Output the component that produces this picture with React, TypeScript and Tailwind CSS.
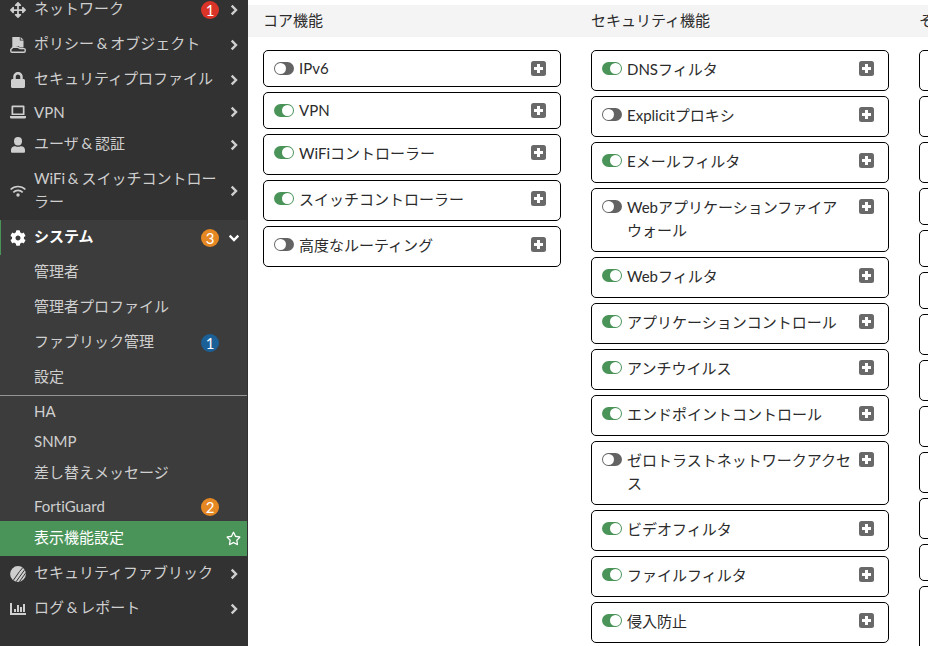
import type { ReactNode } from "react";
import clsx from "clsx";
import { FaArrowsAlt, FaCog, FaLock, FaRegStar } from "react-icons/fa";

type MenuItem = {
  label: string;
  icon?: ReactNode;
  badge?: { count: number; color: string };
  height: string;
};

type Feature = { name: string; enabled: boolean; height?: string };

const ROW = "h-[35px]";
const ROW_SHORT = "h-[30px]";

function PolicyIcon() {
  return (
    <svg width="16" height="16" viewBox="0 0 16 16" fill="currentColor">
      <path d="M2.3 0h7.5v3.4h3.7v7.2H10L8.600 9 2.300 11z" />
      <path d="M10.600 0l2.900 2.700h-2.900z" />
      <path
        d="M3 10.300h4.600c1.400 0 1.500 1.300 2.900 1.300h3.500a1.200 1.200 0 0 1 1.200 1.200v1.300a1.200 1.200 0 0 1-1.200 1.200H2a1.200 1.200 0 0 1-1.200-1.200v-1.600z"
        fill="#323232"
        stroke="currentColor"
        strokeWidth="1.400"
      />
    </svg>
  );
}

function LaptopIcon() {
  return (
    <svg width="16" height="14" viewBox="0 0 16 14" fill="currentColor">
      <path
        fillRule="evenodd"
        d="M2.500 0.500h11a1 1 0 0 1 1 1v8.500h-13V1.500a1 1 0 0 1 1-1zM3.200 2.200v6.300h9.600V2.200z"
      />
      <path d="M0 11h16v1.300a1.200 1.200 0 0 1-1.200 1.200H1.200A1.200 1.200 0 0 1 0 12.300z" />
    </svg>
  );
}

function UserIcon() {
  return (
    <svg width="16" height="16" viewBox="0 0 16 16" fill="currentColor">
      <ellipse cx="8" cy="4.200" rx="4" ry="4.200" />
      <path d="M1 14.800V13c0-2.200 1.700-3.800 3.800-3.800h.6c1.600.7 3.600.7 5.200 0h.6c2.100 0 3.800 1.600 3.800 3.800v1.800a1 1 0 0 1-1 1H2a1 1 0 0 1-1-1z" />
    </svg>
  );
}

function WifiIcon() {
  return (
    <svg width="16" height="12" viewBox="0 0 16 12" fill="none" stroke="currentColor" strokeWidth="1.700">
      <path d="M.6 4.500c4.300-4 10.500-4 14.800 0" />
      <path d="M3.300 7.300c2.700-2.500 6.700-2.500 9.400 0" />
      <circle cx="8" cy="10" r="1.700" fill="currentColor" stroke="none" />
    </svg>
  );
}

function FabricIcon() {
  return (
    <svg width="16" height="16" viewBox="0 0 16 16">
      <defs>
        <clipPath id="fabric">
          <circle cx="8" cy="8" r="7.900" />
        </clipPath>
      </defs>
      <g clipPath="url(#fabric)">
        <rect width="16" height="16" fill="currentColor" />
        <path
          d="M2.500 15.500L9.500 5.500L12.500 2M5.500 16.500L14.500 4M8.500 17L16 6.500M11.500 17L17 9.500"
          fill="none"
          stroke="#323232"
          strokeWidth="1"
        />
      </g>
    </svg>
  );
}

function ReportIcon() {
  return (
    <svg width="16" height="12" viewBox="0 0 16 12" fill="currentColor">
      <path d="M0 0h2v10h14v2H0z" />
      <path d="M4 6h2v3H4zM7 2h2v7H7zM10 4h2v5h-2zM13 1h2v8h-2z" />
    </svg>
  );
}

function Chevron({ down = false }: { down?: boolean }) {
  return (
    <svg
      width="12"
      height="12"
      viewBox="0 0 12 12"
      fill="none"
      stroke="currentColor"
      strokeWidth="2.400"
      className={down ? "rotate-90" : ""}
    >
      <path d="M3.700 1.700L8 6l-4.300 4.300" />
    </svg>
  );
}

const topMenu: MenuItem[] = [
  { label: "ネットワーク", icon: <FaArrowsAlt size={16} />, badge: { count: 1, color: "bg-[#da3327]" }, height: ROW },
  { label: "ポリシー & オブジェクト", icon: <PolicyIcon />, height: ROW },
  { label: "セキュリティプロファイル", icon: <FaLock size={16} />, height: ROW },
  { label: "VPN", icon: <LaptopIcon />, height: ROW_SHORT },
  { label: "ユーザ & 認証", icon: <UserIcon />, height: ROW },
  { label: "WiFi & スイッチコントローラー", icon: <WifiIcon />, height: "h-[58px]" },
];

const systemMenu: MenuItem[] = [
  { label: "管理者", height: ROW },
  { label: "管理者プロファイル", height: ROW },
  { label: "ファブリック管理", badge: { count: 1, color: "bg-[#1b6097]" }, height: ROW },
  { label: "設定", height: ROW },
];

const systemExtraMenu: MenuItem[] = [
  { label: "HA", height: ROW_SHORT },
  { label: "SNMP", height: ROW_SHORT },
  { label: "差し替えメッセージ", height: ROW },
  { label: "FortiGuard", badge: { count: 2, color: "bg-[#e58823]" }, height: ROW_SHORT },
];

const bottomMenu: MenuItem[] = [
  { label: "セキュリティファブリック", icon: <FabricIcon />, height: ROW },
  { label: "ログ & レポート", icon: <ReportIcon />, height: ROW },
];

const coreFeatures: Feature[] = [
  { name: "IPv6", enabled: false, height: "h-[37px]" },
  { name: "VPN", enabled: true, height: "h-[37px]" },
  { name: "WiFiコントローラー", enabled: true },
  { name: "スイッチコントローラー", enabled: true },
  { name: "高度なルーティング", enabled: false },
];

const securityFeatures: Feature[] = [
  { name: "DNSフィルタ", enabled: true },
  { name: "Explicitプロキシ", enabled: false },
  { name: "Eメールフィルタ", enabled: true },
  { name: "Webアプリケーションファイアウォール", enabled: false, height: "h-[64px]" },
  { name: "Webフィルタ", enabled: true },
  { name: "アプリケーションコントロール", enabled: true },
  { name: "アンチウイルス", enabled: true },
  { name: "エンドポイントコントロール", enabled: true },
  { name: "ゼロトラストネットワークアクセス", enabled: false, height: "h-[64px]" },
  { name: "ビデオフィルタ", enabled: true },
  { name: "ファイルフィルタ", enabled: true },
  { name: "侵入防止", enabled: true },
];

// cards of the third column, only their left edge is in view
const otherHeights = [
  "h-[41px]",
  "h-[41px]",
  "h-[41px]",
  "h-[37px]",
  "h-[37px]",
  "h-[37px]",
  "h-[41px]",
  "h-[41px]",
  "h-[41px]",
  "h-[41px]",
  "h-[41px]",
  "h-[37px]",
  "h-[87px]",
];

function MenuRow({
  item,
  className = "",
  trailing,
}: {
  item: MenuItem;
  className?: string;
  trailing?: ReactNode;
}) {
  return (
    <div className={clsx("flex shrink-0 items-center pl-[10px] pr-[7px]", item.height, className)}>
      <span className="flex w-4 shrink-0 justify-center">{item.icon}</span>
      <span
        className={clsx(
          "-mr-8 ml-2 w-[190px] shrink-0 leading-[23px] [word-spacing:-1px]",
          item.height === ROW_SHORT ? "pt-px" : "pb-[3px]",
        )}
      >
        {item.label}
      </span>
      <span className="ml-auto flex shrink-0 items-center">
        {item.badge && (
          <span
            className={clsx(
              "mr-2 mt-px flex h-[18px] w-[18px] items-center justify-center rounded-full text-[15px] leading-[18px] text-white",
              item.badge.color,
            )}
          >
            {item.badge.count}
          </span>
        )}
        <span className="flex w-[14px] justify-center">{trailing}</span>
      </span>
    </div>
  );
}

function Sidebar() {
  return (
    <nav className="flex w-[248px] shrink-0 flex-col bg-[#323232] text-[#cfcfcf]">
      <div className="-mt-2">
        {topMenu.map((item) => (
          <MenuRow key={item.label} item={item} trailing={<Chevron />} />
        ))}
      </div>
      <div className="mr-px bg-[#3c3c3c]">
        <MenuRow
          item={{
            label: "システム",
            icon: <FaCog size={16} />,
            badge: { count: 3, color: "bg-[#e58823]" },
            height: ROW,
          }}
          className="-mr-px font-bold text-white shadow-[inset_1px_0_0_#4a9459] [&_.rounded-full]:font-normal"
          trailing={<Chevron down />}
        />
        {systemMenu.map((item) => (
          <MenuRow key={item.label} item={item} className="-mr-px" />
        ))}
        <div className="h-px bg-[#959595]" />
        {systemExtraMenu.map((item) => (
          <MenuRow key={item.label} item={item} className="-mr-px" />
        ))}
        <div className="bg-[#4a9459]">
          <MenuRow
            item={{ label: "表示機能設定", height: ROW }}
            className="text-white"
            trailing={<FaRegStar size={15} className="shrink-0" />}
          />
        </div>
      </div>
      {bottomMenu.map((item) => (
        <MenuRow key={item.label} item={item} trailing={<Chevron />} />
      ))}
    </nav>
  );
}

function Toggle({ on }: { on: boolean }) {
  return (
    <span
      className={clsx(
        "mt-1 flex h-[13px] w-5 shrink-0 rounded-full p-px",
        on ? "justify-end bg-[#4a9459]" : "bg-[#636363]",
      )}
    >
      <span className="h-[11px] w-[11px] rounded-full bg-white" />
    </span>
  );
}

function PlusButton() {
  return (
    <svg width="15" height="15" viewBox="0 0 15 15" className="ml-auto mt-[3px] shrink-0">
      <rect width="15" height="15" rx="2.500" fill="#696969" />
      <path d="M6 3h3v3h3v3H9v3H6V9H3V6h3z" fill="#fff" />
    </svg>
  );
}

function FeatureCard({ feature }: { feature: Feature }) {
  return (
    <div
      className={clsx(
        "flex w-[298px] items-start rounded-[5px] border border-black pl-[10px] pr-[14px] pt-[7px]",
        feature.height ?? "h-[41px]",
      )}
    >
      <Toggle on={feature.enabled} />
      <span
        className={clsx(
          "ml-[5px] w-[226px] [line-break:strict]",
          feature.height === "h-[37px]" ? "leading-[21px]" : "leading-[23px]",
        )}
      >
        {feature.name}
      </span>
      <PlusButton />
    </div>
  );
}

function FeatureColumn({ title, children }: { title: string; children: ReactNode }) {
  return (
    <section className="w-[328px] shrink-0">
      <h2 className="flex h-8 items-center bg-[#f4f4f4] pb-px pl-[15px] leading-[23px]">{title}</h2>
      <div className="flex flex-col gap-[5px] pl-[15px] pt-[13px]">{children}</div>
    </section>
  );
}

export default function App() {
  return (
    <div
      lang="ja"
      className="flex h-[646px] w-[928px] overflow-hidden bg-white font-[Lato,'Noto_Sans_CJK_JP',sans-serif] text-[15px] [font-variant-ligatures:none]"
    >
      <Sidebar />
      <main className="flex min-w-0 flex-1 overflow-hidden pt-[5px] text-[#2b2b2b]">
        <FeatureColumn title="コア機能">
          {coreFeatures.map((feature) => (
            <FeatureCard key={feature.name} feature={feature} />
          ))}
        </FeatureColumn>
        <FeatureColumn title="セキュリティ機能">
          {securityFeatures.map((feature) => (
            <FeatureCard key={feature.name} feature={feature} />
          ))}
        </FeatureColumn>
        <FeatureColumn title="その他の機能">
          {otherHeights.map((height, i) => (
            <div key={i} className={clsx("w-[298px] rounded-[5px] border border-black", height)} />
          ))}
        </FeatureColumn>
      </main>
    </div>
  );
}
